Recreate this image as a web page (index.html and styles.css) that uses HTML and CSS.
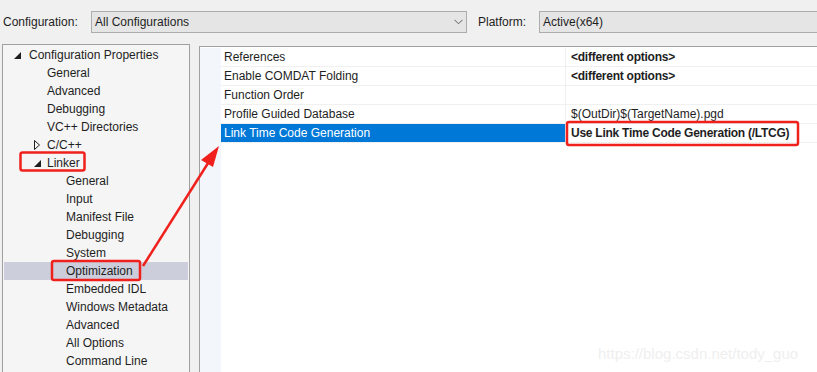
FILE: index.html
```html
<!DOCTYPE html>
<html lang="en">
<head>
    <meta charset="UTF-8">
    <title>Property Pages</title>
    <link rel="stylesheet" href="styles.css">
</head>
<body>
    <div class="toolbar">
        <span class="label">Configuration:</span>
        <div class="combo combo-config">
            <span>All Configurations</span>
            <svg class="chevron" width="9" height="6" viewBox="0 0 9 6"><path d="M0.5 0.8 L4.5 4.8 L8.5 0.8" fill="none" stroke="#606060" stroke-width="1"/></svg>
        </div>
        <span class="label label-platform">Platform:</span>
        <div class="combo combo-platform">
            <span>Active(x64)</span>
        </div>
    </div>

    <div class="main">
        <div class="tree">
            <div class="node lvl0"><svg class="tri" width="7" height="7" viewBox="0 0 7 7"><path d="M7 0 L7 7 L0 7 Z" fill="#1e1e1e"/></svg>Configuration Properties</div>
            <div class="node lvl1">General</div>
            <div class="node lvl1">Advanced</div>
            <div class="node lvl1">Debugging</div>
            <div class="node lvl1">VC++ Directories</div>
            <div class="node lvl1 has-tri collapsed"><svg class="tri" width="6" height="10" viewBox="0 0 6 10"><path d="M0.5 0.5 L5.5 5 L0.5 9.5 Z" fill="none" stroke="#1e1e1e" stroke-width="1"/></svg>C/C++</div>
            <div class="node lvl1 has-tri"><svg class="tri" width="7" height="7" viewBox="0 0 7 7"><path d="M7 0 L7 7 L0 7 Z" fill="#1e1e1e"/></svg>Linker</div>
            <div class="node lvl2">General</div>
            <div class="node lvl2">Input</div>
            <div class="node lvl2">Manifest File</div>
            <div class="node lvl2">Debugging</div>
            <div class="node lvl2">System</div>
            <div class="node lvl2 selected">Optimization</div>
            <div class="node lvl2">Embedded IDL</div>
            <div class="node lvl2">Windows Metadata</div>
            <div class="node lvl2">Advanced</div>
            <div class="node lvl2">All Options</div>
            <div class="node lvl2">Command Line</div>
        </div>

        <div class="props">
            <div class="gutter"></div>
            <div class="grid">
                <div class="row">
                    <div class="name">References</div>
                    <div class="value bold">&lt;different options&gt;</div>
                </div>
                <div class="row">
                    <div class="name">Enable COMDAT Folding</div>
                    <div class="value bold">&lt;different options&gt;</div>
                </div>
                <div class="row">
                    <div class="name">Function Order</div>
                    <div class="value"></div>
                </div>
                <div class="row">
                    <div class="name">Profile Guided Database</div>
                    <div class="value">$(OutDir)$(TargetName).pgd</div>
                </div>
                <div class="row active">
                    <div class="name">Link Time Code Generation</div>
                    <div class="value bold">Use Link Time Code Generation (/LTCG)</div>
                </div>
            </div>
        </div>
    </div>

    <!-- annotations drawn over the screenshot -->
    <svg class="marks" width="817" height="372" viewBox="0 0 817 372">
        <g fill="none" stroke="#f0201c" stroke-width="2.5">
            <rect x="20.5" y="152.5" width="64" height="18" rx="2"/>
            <rect x="52" y="261" width="88" height="19" rx="2"/>
            <rect x="567" y="122" width="231" height="23" rx="2"/>
        </g>
        <line x1="143" y1="266" x2="210" y2="160" stroke="#f0201c" stroke-width="2.5"/>
        <path d="M219 146 L201 160 L213 167 Z" fill="#f0201c"/>
    </svg>

    <div class="watermark">https://blog.csdn.net/tody_guo</div>
</body>
</html>
```

FILE: styles.css
```css
body {
    margin: 0;
    width: 817px;
    height: 372px;
    overflow: hidden;
    background-color: #f0f0f0;
    font-family: 'Liberation Sans', Arial, sans-serif;
    font-size: 12px;
    color: #1e1e1e;
    position: relative;
}

.toolbar {
    display: flex;
    align-items: center;
    height: 44px;
    padding-left: 3px;
}

.label {
    width: 88px;
}

.label-platform {
    width: 61px;
    margin-left: 11px;
}

.combo {
    display: flex;
    align-items: center;
    height: 20px;
    background-color: #e5e5e5;
    border: 1px solid #adadad;
    padding-left: 3px;
    box-sizing: content-box;
}

.combo-config {
    width: 371px;
}

.combo-platform {
    flex: 1;
    border-right: none;
}

.chevron {
    margin-left: auto;
    margin-right: 3px;
}

.main {
    display: flex;
    padding-left: 2px;
    height: 328px;
}

.tree {
    width: 184px;
    background-color: #f5f5f5;
    border: 1px solid #a0a0a0;
    border-bottom: none;
    padding: 1px 1px 0;
}

.node {
    height: 18px;
    line-height: 18px;
    white-space: nowrap;
    position: relative;
}

.lvl0 {
    padding-left: 25px;
}

.lvl1 {
    padding-left: 43px;
}

.lvl2 {
    padding-left: 62px;
}

.tri {
    position: absolute;
    top: 6px;
    left: 10px;
}

.has-tri .tri {
    left: 30px;
}

.collapsed .tri {
    top: 4px;
}

.selected {
    background-color: #cccedb;
}

.props {
    flex: 1;
    display: flex;
    margin-left: 9px;
    margin-top: 2px;
    background-color: #fff;
    border-top: 1px solid #a0a0a0;
    border-left: 1px solid #a0a0a0;
    padding-top: 1px;
}

.gutter {
    width: 21px;
    background-color: #f3f6fb;
}

.grid {
    flex: 1;
}

.row {
    display: flex;
    height: 18px;
    line-height: 18px;
    border-bottom: 1px solid #f0f0f0;
}

.name {
    width: 341px;
    padding-left: 3px;
    border-right: 1px solid #f0f0f0;
}

.value {
    flex: 1;
    padding-left: 5px;
    white-space: nowrap;
}

.bold {
    font-weight: bold;
    letter-spacing: -0.25px;
}

.active .name {
    background-color: #0078d7;
    color: #fff;
}

.marks {
    position: absolute;
    left: 0;
    top: 0;
}

.watermark {
    position: absolute;
    left: 598px;
    top: 345px;
    font-family: 'Liberation Sans', Arial, sans-serif;
    font-size: 15px;
    color: #efefef;
}
```
